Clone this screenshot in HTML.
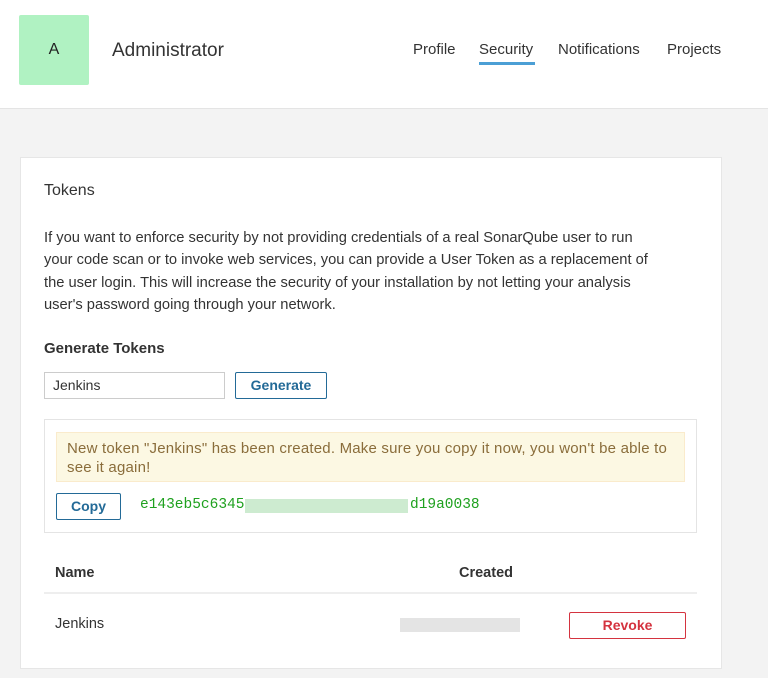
<html><head><style>
body{margin:0;width:768px;height:678px;background:#f3f3f3;font-family:"Liberation Sans",sans-serif;color:#333;position:relative;overflow:hidden}
.a{position:absolute;white-space:nowrap}
</style></head><body>
<div class="a" style="left:0;top:0;width:768px;height:108px;background:#fff;border-bottom:1px solid #e4e4e4"></div>
<div class="a" style="left:19px;top:15px;width:70px;height:70px;background:#b0f2c2;border-radius:2px;font-size:16px;line-height:70px;text-align:center;color:#222">A</div>
<div class="a" style="left:112px;top:40px;font-size:19px;color:#333">Administrator</div>
<div class="a" style="left:413px;top:41px;font-size:15px">Profile</div>
<div class="a" style="left:479px;top:41px;font-size:15px">Security</div>
<div class="a" style="left:479px;top:62px;width:56px;height:3px;background:#4b9fd5"></div>
<div class="a" style="left:558px;top:41px;font-size:15px">Notifications</div>
<div class="a" style="left:667px;top:41px;font-size:15px">Projects</div>
<div class="a" style="left:20px;top:157px;width:700px;height:510px;background:#fff;border:1px solid #e6e6e6"></div>
<div class="a" style="left:44px;top:182px;font-size:16px">Tokens</div>
<div class="a" style="left:44px;top:227px;font-size:14.7px;line-height:22.3px">If you want to enforce security by not providing credentials of a real SonarQube user to run<br>your code scan or to invoke web services, you can provide a User Token as a replacement of<br>the user login. This will increase the security of your installation by not letting your analysis<br>user's password going through your network.</div>
<div class="a" style="left:44px;top:340px;font-size:15px;font-weight:bold">Generate Tokens</div>
<div class="a" style="left:44px;top:372px;width:181px;height:27px;border:1px solid #ccc;box-sizing:border-box;font-size:14px;line-height:25px;padding-left:8px">Jenkins</div>
<div class="a" style="left:235px;top:372px;width:92px;height:27px;border:1px solid #236a97;box-sizing:border-box;border-radius:2px;font-size:14px;font-weight:bold;color:#236a97;text-align:center;line-height:25px">Generate</div>
<div class="a" style="left:44px;top:419px;width:653px;height:114px;border:1px solid #e4e4e4;box-sizing:border-box"></div>
<div class="a" style="left:56px;top:432px;width:629px;height:50px;background:#fcf8e3;border:1px solid #faebcc;box-sizing:border-box;color:#8a6d3b;font-size:15px;letter-spacing:0.2px;line-height:19px;padding:6px 10px">New token "Jenkins" has been created. Make sure you copy it now, you won't be able to<br>see it again!</div>
<div class="a" style="left:56px;top:493px;width:65px;height:27px;border:1px solid #236a97;box-sizing:border-box;border-radius:2px;font-size:14px;font-weight:bold;color:#236a97;text-align:center;line-height:25px">Copy</div>
<div class="a" style="left:140px;top:497px;font-family:'Liberation Mono',monospace;font-size:14.5px;color:#1fa11f">e143eb5c6345</div>
<div class="a" style="left:245px;top:499px;width:170px;height:14px;background:#cdebd0"></div>
<div class="a" style="left:408px;top:497px;font-family:'Liberation Mono',monospace;font-size:14.5px;color:#1fa11f;background:#fff;padding-left:2px">d19a0038</div>
<div class="a" style="left:55px;top:565px;font-size:14.5px;font-weight:bold">Name</div>
<div class="a" style="left:459px;top:565px;font-size:14.5px;font-weight:bold">Created</div>
<div class="a" style="left:44px;top:592px;width:653px;height:2px;background:#eee"></div>
<div class="a" style="left:55px;top:616px;font-size:14.5px">Jenkins</div>
<div class="a" style="left:400px;top:618px;width:120px;height:14px;background:#ddd;opacity:.8"></div>
<div class="a" style="left:569px;top:612px;width:117px;height:27px;border:1px solid #d4333f;box-sizing:border-box;border-radius:2px;font-size:14px;font-weight:bold;color:#d4333f;text-align:center;line-height:25px">Revoke</div>
</body></html>
